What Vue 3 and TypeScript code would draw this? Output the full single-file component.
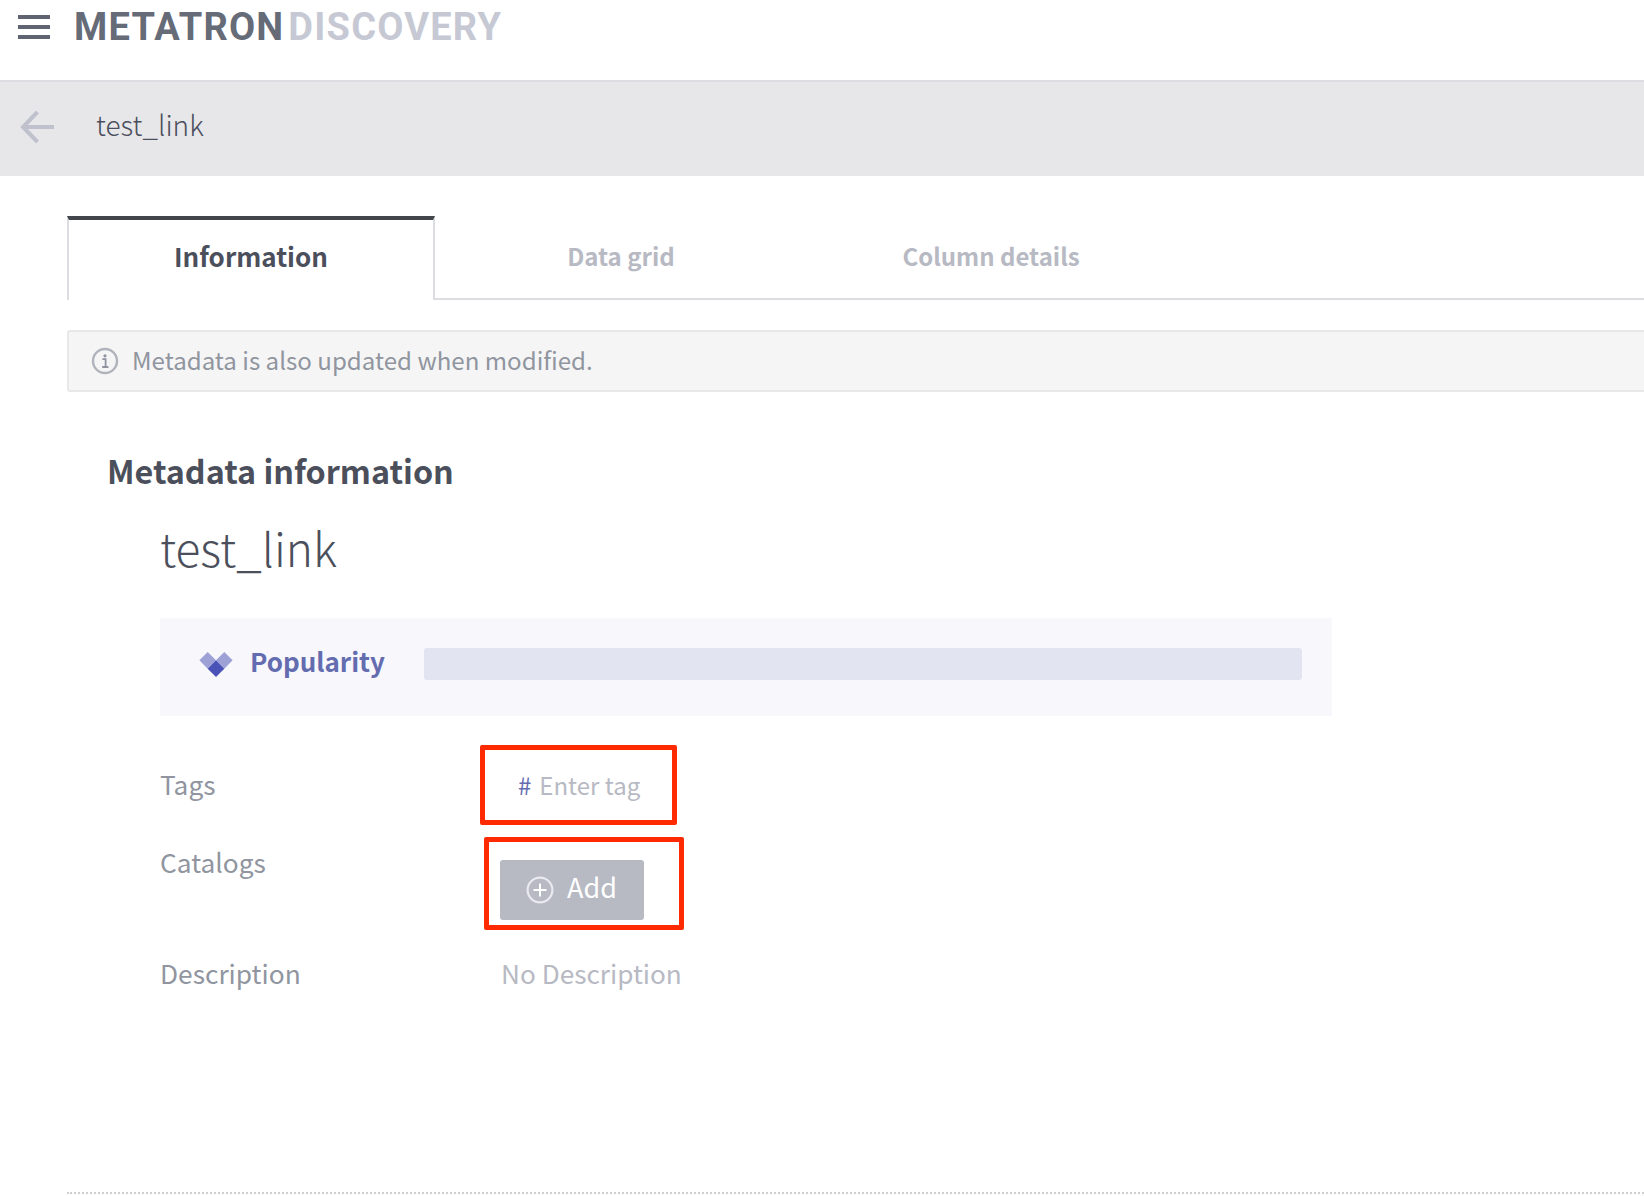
<script setup lang="ts">
const tabs: string[] = ['Information', 'Data grid', 'Column details']
</script>

<template>
  <div class="page">
    <header class="top">
      <svg class="burger" width="32" height="24" viewBox="0 0 32 24">
        <rect y="0" width="32" height="4" fill="#5f6470" />
        <rect y="10" width="32" height="4" fill="#5f6470" />
        <rect y="20" width="32" height="4" fill="#5f6470" />
      </svg>
      <div class="logo"><span class="logo-a">METATRON</span><span class="logo-b">DISCOVERY</span></div>
    </header>

    <div class="titlebar">
      <svg class="back" width="34" height="34" viewBox="0 0 34 34" fill="none" stroke="#bfc1cd" stroke-width="4">
        <path d="M34 17H3" />
        <path d="M17.5 2L3 17l14.5 15" />
      </svg>
      <span class="title">test_link</span>
    </div>

    <main class="main">
      <nav class="tabs">
        <div v-for="(t, i) in tabs" :key="t" class="tab" :class="{ active: i === 0 }">{{ t }}</div>
      </nav>

      <div class="notice">
        <svg width="28" height="28" viewBox="0 0 28 28" fill="none">
          <circle cx="14" cy="14" r="12" stroke="#b0b3bc" stroke-width="2.4" />
          <circle cx="14" cy="8.8" r="1.6" fill="#90949f" />
          <path d="M11.4 12.2H14.6V19.8M11.2 20H17.4" stroke="#90949f" stroke-width="1.8" />
        </svg>
        <span class="notice-text">Metadata is also updated when modified.</span>
      </div>

      <h2 class="section">Metadata information</h2>

      <section class="detail">
        <h1 class="name">test_link</h1>

        <div class="popularity">
          <svg width="36" height="27" viewBox="0 0 34 26">
            <path d="M9 1L17 9 9 17 1 9Z" fill="#9da1d6" />
            <path d="M25 1L33 9 25 17 17 9Z" fill="#9da1d6" />
            <path d="M17 9L25 17 17 25 9 17Z" fill="#4a52b8" />
          </svg>
          <span class="pop-label">Popularity</span>
          <div class="pop-bar"></div>
        </div>

        <div class="row row-tags">
          <span class="label">Tags</span>
          <div class="mark mark-tags"><span class="hash">#</span> <span class="ph">Enter tag</span></div>
        </div>

        <div class="row row-cat">
          <span class="label">Catalogs</span>
          <div class="mark mark-cat">
            <button class="add" type="button">
              <svg width="28" height="28" viewBox="0 0 28 28" fill="none" stroke="#fff" stroke-width="2">
                <circle cx="14" cy="14" r="12.4" stroke="#e8eaef" stroke-width="2.2" />
                <path d="M14 7.5V20.5M7.5 14H20.5" />
              </svg>
              <span>Add</span>
            </button>
          </div>
        </div>

        <div class="row row-desc">
          <span class="label">Description</span>
          <span class="none">No Description</span>
        </div>
      </section>

      <div class="dots"></div>
    </main>
  </div>
</template>

<style scoped>
.page {
  width: 1644px;
  height: 1196px;
  overflow: hidden;
  background: #fff;
  font-family: "Noto Sans CJK KR", "Noto Sans", sans-serif;
  color: #4b4f5c;
}
.top {
  height: 80px;
  border-bottom: 2px solid #dcdce2;
  display: flex;
  align-items: flex-start;
  padding-left: 18px;
}
.burger { margin-top: 15px; }
.logo {
  margin-left: 24px;
  margin-top: 3px;
  font-family: Roboto, sans-serif;
  font-weight: 700;
  font-size: 38px;
  line-height: 48px;
  letter-spacing: 1.2px;
  white-space: nowrap;
}
.logo-a { color: #666b78; }
.logo-b { color: #c6c9d4; margin-left: 4px; }
.titlebar {
  height: 94px;
  background: #e7e7ea;
  display: flex;
  align-items: center;
  padding-left: 20px;
}
.back { margin-bottom: 4px; }
.title {
  margin-left: 42px;
  margin-bottom: 10px;
  font-size: 28px;
  font-weight: 300;
  color: #4b4f5c;
}
.main { padding: 40px 0 0 67px; }
.tabs {
  display: flex;
  height: 82px;
  border-bottom: 2px solid #dcdde0;
}
.tab {
  width: 368px;
  height: 82px;
  margin-right: 2px;
  display: flex;
  align-items: center;
  justify-content: center;
  padding-bottom: 4px;
  box-sizing: border-box;
  font-size: 24px;
  font-weight: 700;
  color: #b7b9c3;
}
.tab.active {
  height: 84px;
  color: #4b4f5c;
  background: #fff;
  border-top: 4px solid #43454d;
  border-left: 2px solid #dcdde0;
  border-right: 2px solid #dcdde0;
  padding-bottom: 10px;
  font-size: 26px;
}
.notice {
  margin-top: 30px;
  height: 62px;
  box-sizing: border-box;
  display: flex;
  align-items: center;
  gap: 13px;
  padding-left: 22px;
  background: #f5f5f6;
  border: 2px solid #e7e8ea;
  border-right: 0;
  border-radius: 3px 0 0 3px;
  font-size: 24.1px;
  color: #90959f;
}
.notice-text { margin-bottom: 4px; }
.section {
  margin: 53px 0 0 40px;
  font-size: 32.3px;
  line-height: 50px;
  font-weight: 700;
  color: #4b4f5c;
}
.detail { margin-left: 93px; }
.name {
  margin: 21px 0 0;
  font-size: 46px;
  line-height: 62px;
  font-weight: 300;
  color: #4b4f5c;
}
.popularity {
  margin-top: 40px;
  width: 1172px;
  height: 98px;
  box-sizing: border-box;
  display: flex;
  align-items: flex-start;
  padding: 30px 30px 0 38px;
  background: #f7f7fc;
}
.popularity svg { margin-top: 3px; flex: none; }
.pop-label {
  margin-left: 16px;
  margin-top: -3px;
  width: 174px;
  flex: none;
  font-size: 26px;
  line-height: 32px;
  font-weight: 700;
  color: #646cb0;
}
.pop-bar {
  flex: 1;
  height: 32px;
  background: #e2e4f1;
  border-radius: 3px;
}
.row { display: flex; align-items: flex-start; }
.label {
  font-size: 26.3px;
  line-height: 36px;
  color: #90959f;
}
.mark {
  box-sizing: border-box;
  border: 5px solid #ff2a00;
  border-radius: 2px;
}
.row-tags { margin-top: 29px; }
.row-tags .label { width: 320px; margin-top: 21px; }
.mark-tags {
  width: 197px;
  height: 80px;
  display: flex;
  align-items: center;
  gap: 8px;
  padding-left: 33px;
  padding-bottom: 2px;
  font-size: 24px;
}
.hash { color: #646cb0; }
.ph { color: #b7b9c3; }
.row-cat { margin-top: 12px; }
.row-cat .label { width: 324px; margin-top: 7px; }
.mark-cat {
  width: 200px;
  height: 93px;
  padding: 18px 0 0 11px;
}
.add {
  width: 144px;
  height: 60px;
  border: 0;
  border-radius: 3px;
  background: #b7b9c3;
  color: #fff;
  display: flex;
  align-items: center;
  gap: 13px;
  padding: 0 0 7px 26px;
  font-family: inherit;
  font-size: 27px;
}
.add svg { margin-top: 6px; flex: none; }
.row-desc { margin-top: 25px; }
.row-desc .label { width: 341px; }
.none { font-size: 26.2px; line-height: 36px; color: #b7b9c3; }
.dots {
  margin-top: 201px;
  border-top: 2px dotted #cfcfcf;
}
</style>

<style>
html, body { margin: 0; overflow: hidden; }
h1, h2 { margin: 0; }
</style>
